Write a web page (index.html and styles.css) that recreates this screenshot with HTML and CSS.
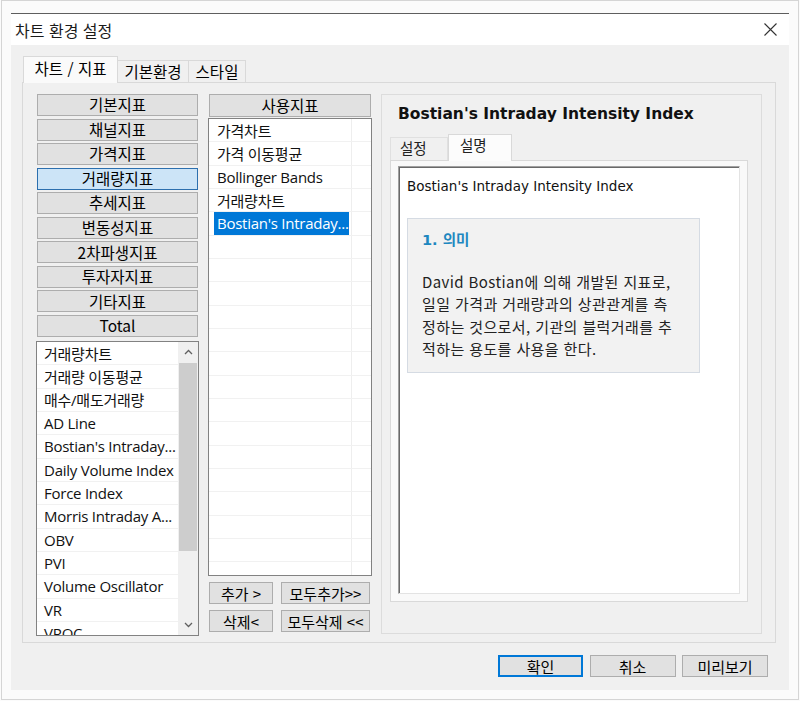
FILE: index.html
```html
<!DOCTYPE html>
<html lang="ko">
<head>
<meta charset="utf-8">
<title>차트 환경 설정</title>
<link rel="stylesheet" href="styles.css">
</head>
<body>
<div class="screen">
  <div class="dialog">
    <div class="titlebar">
      <span class="title">차트 환경 설정</span>
      <svg class="close" width="13" height="13" viewBox="0 0 13 13"><path d="M0.5 0.5L12.5 12.5M12.5 0.5L0.5 12.5" stroke="#333" stroke-width="1.1" fill="none"/></svg>
    </div>
    <div class="body">
      <div class="tabs">
        <div class="tab active t1">차트 / 지표</div>
        <div class="tab t2">기본환경</div>
        <div class="tab t3">스타일</div>
      </div>
      <div class="panel">
        <div class="col1">
          <div class="cats">
            <div class="btn">기본지표</div>
            <div class="btn">채널지표</div>
            <div class="btn">가격지표</div>
            <div class="btn sel">거래량지표</div>
            <div class="btn">추세지표</div>
            <div class="btn">변동성지표</div>
            <div class="btn">2차파생지표</div>
            <div class="btn">투자자지표</div>
            <div class="btn">기타지표</div>
            <div class="btn">Total</div>
          </div>
          <div class="list list1">
            <div class="items">
              <div class="row">거래량차트</div>
              <div class="row">거래량 이동평균</div>
              <div class="row">매수/매도거래량</div>
              <div class="row">AD Line</div>
              <div class="row">Bostian's Intraday...</div>
              <div class="row">Daily Volume Index</div>
              <div class="row">Force Index</div>
              <div class="row">Morris Intraday A...</div>
              <div class="row">OBV</div>
              <div class="row">PVI</div>
              <div class="row">Volume Oscillator</div>
              <div class="row">VR</div>
              <div class="row">VROC</div>
            </div>
            <div class="sb">
              <div class="arrow"><svg width="9" height="6" viewBox="0 0 9 6"><path d="M1 5L4.5 1.5L8 5" stroke="#606060" stroke-width="1.3" fill="none"/></svg></div>
              <div class="thumb"></div>
              <div class="track"></div>
              <div class="arrow"><svg width="9" height="6" viewBox="0 0 9 6"><path d="M1 1L4.5 4.5L8 1" stroke="#606060" stroke-width="1.3" fill="none"/></svg></div>
            </div>
          </div>
        </div>
        <div class="col2">
          <div class="btn head">사용지표</div>
          <div class="list list2">
            <div class="row"><span class="item">가격차트</span></div>
            <div class="row"><span class="item">가격 이동평균</span></div>
            <div class="row"><span class="item">Bollinger Bands</span></div>
            <div class="row"><span class="item">거래량차트</span></div>
            <div class="row"><span class="item sel">Bostian's Intraday...</span></div>
            <div class="row"></div>
            <div class="row"></div>
            <div class="row"></div>
            <div class="row"></div>
            <div class="row"></div>
            <div class="row"></div>
            <div class="row"></div>
            <div class="row"></div>
            <div class="row"></div>
            <div class="row"></div>
            <div class="row"></div>
            <div class="row"></div>
            <div class="row"></div>
            <div class="row"></div>
            <div class="row"></div>
          </div>
          <div class="btnrow">
            <div class="btn small">추가 &gt;</div>
            <div class="btn wide">모두추가&gt;&gt;</div>
          </div>
          <div class="btnrow">
            <div class="btn small">삭제&lt;</div>
            <div class="btn wide">모두삭제 &lt;&lt;</div>
          </div>
        </div>
        <div class="group">
          <div class="group-title">Bostian's Intraday Intensity Index</div>
          <div class="subtabs">
            <div class="subtab">설정</div>
            <div class="subtab active">설명</div>
          </div>
          <div class="subpanel">
            <div class="textbox">
              <div class="lead">Bostian's Intraday Intensity Index</div>
              <div class="note">
                <h4>1. 의미</h4>
                <p>David Bostian에 의해 개발된 지표로,<br>일일 가격과 거래량과의 상관관계를 측<br>정하는 것으로서, 기관의 블럭거래를 추<br>적하는 용도를 사용을 한다.</p>
              </div>
            </div>
          </div>
        </div>
      </div>
      <div class="footer">
        <div class="btn fbtn ok">확인</div>
        <div class="btn fbtn">취소</div>
        <div class="btn fbtn">미리보기</div>
      </div>
    </div>
  </div>
</div>
</body>
</html>
```

FILE: styles.css
```css
* { box-sizing: border-box; }
html, body { margin: 0; padding: 0; background: #fbfbfb; }
body { font-family: "Noto Sans CJK KR", sans-serif; color: #000; }

.screen {
  width: 798px; height: 700px; margin: 0 1px;
  border: 1px solid #d5d5d5;
  padding: 12px 0 0 9px;
  background: #fbfbfb;
}
.dialog {
  width: 778px; height: 677px;
  border-top: 1px solid #5e5e5e;
  display: flex; flex-direction: column;
}
.titlebar {
  height: 31px; background: #fff;
  display: flex; align-items: center; justify-content: space-between;
  padding: 0 12px 0 4px;
}
.title { font-size: 16px; color: #1a1a1a; line-height: 1; }
.close { display: block; }

.body { flex: 1; background: #f0f0f0; padding: 11px 13px 0 11px; }

.tabs { display: flex; align-items: flex-end; height: 26px; padding-left: 1px; }
.tab {
  height: 22px; border: 1px solid #d9d9d9; border-bottom: none;
  background: #f0f0f0; font-size: 15.5px; line-height: 1;
  display: flex; align-items: center; justify-content: center;
  margin-left: -1px;
}
.tab.active {
  height: 27px; margin-bottom: -1px; margin-left: 0;
  background: #fafafa; position: relative; z-index: 1; padding-bottom: 2px;
}
.t1 { width: 95px; }
.t2 { width: 72px; }
.t3 { width: 58px; }

.panel {
  width: 754px; height: 561px;
  border: 1px solid #d9d9d9; background: #f0f0f0;
  padding: 11px 13px 0 13px;
  display: flex; gap: 9px; align-items: flex-start;
}

.btn {
  height: 22px; background: #e1e1e1; border: 1px solid #adadad;
  font-size: 15px; line-height: 1; color: #000;
  display: flex; align-items: center; justify-content: center;
  white-space: nowrap;
}

.col1 { width: 163px; display: flex; flex-direction: column; }
.cats { display: flex; flex-direction: column; gap: 2.55px; padding: 0 1px; }
.cats .btn { font-size: 15.5px; }
.cats .btn.sel { background: #cce4f7; border-color: #2c6fae; }

.list { background: #fff; border: 1px solid #828282; overflow: hidden; }
.row {
  height: 23.33px; border-bottom: 1px solid #f1f1f1;
  display: flex; align-items: center;
  font-family: "Open Sans", "Noto Sans CJK KR", sans-serif; font-size: 15px;
  letter-spacing: -0.25px;
  white-space: nowrap; overflow: hidden; color: #111;
}
.list1 { height: 295px; margin-top: 4px; display: flex; }
.list1 .items { width: 141px; overflow: hidden; }
.list1 .row { padding-left: 7px; }

.sb { width: 20px; background: #f0f0f0; display: flex; flex-direction: column; align-items: center; }
.sb .arrow { height: 20px; width: 20px; display: flex; align-items: center; justify-content: center; }
.sb .thumb { width: 18px; height: 188px; background: #cdcdcd; margin-top: 1px; }
.sb .track { flex: 1; }

.col2 { width: 164px; display: flex; flex-direction: column; }
.btn.head { height: 23px; margin: 0 1px; font-size: 15.5px; }
.list2 {
  height: 458px; margin-top: 1px;
  background-image: linear-gradient(to right, transparent 142px, #eeeeee 142px, #eeeeee 143px, transparent 143px);
}
.list2 .row { background: transparent; }
.list2 .item { margin-left: 5px; width: 135px; height: 100%; padding-left: 3px; display: flex; align-items: center; overflow: hidden; }
.list2 .item.sel { background: #0078d7; color: #fff; }

.btnrow { display: flex; gap: 8px; padding: 0 1px; margin-top: 6px; }
.btn.small { width: 64px; }
.btn.wide { width: 89px; }

.group {
  width: 381px; height: 540px;
  border: 1px solid #dcdcdc; background: #f0f0f0;
  padding: 0 13px 0 8px;
}
.group-title {
  margin-top: 9px; height: 20px; padding-left: 8px;
  font-family: "DejaVu Sans", "Noto Sans CJK KR", sans-serif;
  font-weight: bold; font-size: 15.5px; line-height: 20px; color: #111;
  white-space: nowrap;
}
.subtabs { display: flex; align-items: flex-end; height: 26px; margin-top: 10px; }
.subtab {
  width: 58px; height: 23px;
  border: 1px solid #e0e0e0; border-bottom: none; background: #f0f0f0;
  font-size: 14.5px; line-height: 16px; padding: 2px 0 0 9px; color: #222;
}
.subtab.active {
  width: 64px; height: 27px; margin-bottom: -1px;
  background: #fcfcfc; border-color: #d9d9d9;
  padding: 2px 0 0 11px; position: relative; z-index: 1;
}
.subpanel {
  height: 442px; border: 1px solid #d9d9d9; background: #f9f9f9;
  padding: 5px 7px 7px 7px;
}
.textbox {
  height: 428px; background: #fff;
  border-top: 1px solid #a0a0a0; border-left: 1px solid #a0a0a0;
  border-right: 1px solid #e3e3e3; border-bottom: 1px solid #e3e3e3;
  box-shadow: inset 1px 1px 0 #696969;
  padding: 9px 0 0 8px;
}
.lead {
  font-family: "DejaVu Sans", "Noto Sans CJK KR", sans-serif;
  font-size: 13.5px; line-height: 20px; color: #111; white-space: nowrap;
}
.note {
  margin-top: 22px; width: 293px; height: 155px;
  background: #f2f2f2; border: 1px solid #d5dbe3;
  padding: 11px 0 0 14px;
}
.note h4 {
  margin: 0; font-family: "DejaVu Sans", "Noto Sans CJK KR", sans-serif;
  font-weight: bold; font-size: 14.5px; line-height: 20px; color: #1e88c0;
}
.note p {
  margin: 21px 0 0; font-family: "Noto Sans CJK KR", sans-serif;
  font-size: 15px; letter-spacing: 0.4px; line-height: 22.3px; color: #222; white-space: nowrap;
}

.footer { display: flex; justify-content: flex-end; gap: 6.5px; margin-top: 12px; padding-right: 8px; }
.fbtn { width: 86px; }
.fbtn.ok { width: 85px; border: 2px solid #0078d7; }
```
